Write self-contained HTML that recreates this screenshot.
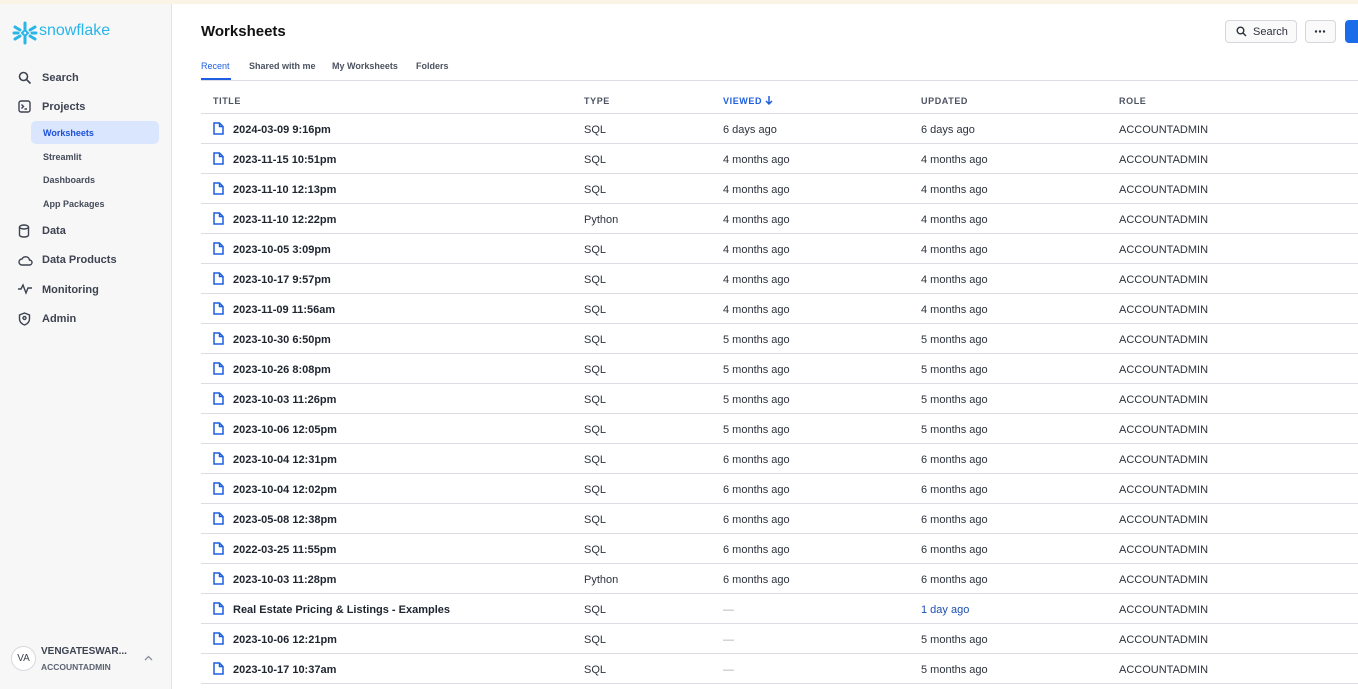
<!DOCTYPE html>
<html><head><meta charset="utf-8"><style>
*{margin:0;padding:0;box-sizing:border-box}
body{width:1358px;height:689px;overflow:hidden;background:#fff;font-family:"Liberation Sans",Arial,sans-serif;color:#1e252f;position:relative}
.top{position:absolute;left:0;top:0;width:1358px;height:4px;background:#fbf3e4}
.side{position:absolute;left:0;top:4px;width:172px;height:685px;background:#f7f7f8;border-right:1px solid #e3e4e8}
.nav{position:absolute;left:42px;font-size:11px;color:#3d4350;font-weight:bold}
.sub{position:absolute;left:43px;font-size:9px;color:#444b58;font-weight:bold}
.ic{position:absolute;left:18px}
.a{position:absolute;white-space:nowrap}
.h{font-size:9px;font-weight:bold;letter-spacing:.6px;color:#4b5260}
.line{position:absolute;left:201px;width:1157px;height:1px;background:#dcdde6}
.r{font-size:11px;color:#2c323c}
.t{font-size:11px;font-weight:bold;color:#1e252f}
</style></head><body>
<div class="top"></div>
<div class="side">
<svg style="position:absolute;left:12px;top:17px" width="26" height="24" viewBox="0 0 26 24" fill="none" stroke="#29b5e8" stroke-width="3" stroke-linecap="round"><path d="M13 2v6M13 16v6M3 6l5 3M18 15l5 3M3 18l5-3M18 9l5-3M2 12h4M20 12h4"/><path d="M10 12l3-3 3 3-3 3z" stroke-width="2"/></svg>
<div class="a" style="left:39px;top:18px;font-size:16px;color:#29b5e8">snowflake</div>
<svg class="ic" style="top:67px" width="14" height="14" viewBox="0 0 14 14" fill="none" stroke="#3d4350" stroke-width="1.6"><circle cx="5.5" cy="5.5" r="4"/><path d="M8.5 8.5l4 4"/></svg>
<div class="nav" style="top:68px">Search</div>
<svg class="ic" style="top:96px" width="13" height="13" viewBox="0 0 13 13" fill="none" stroke="#3d4350" stroke-width="1.4"><rect x="1" y="1" width="11" height="11" rx="2"/><path d="M3.5 4.5l2 2-2 2M6.5 9h2.5"/></svg>
<div class="nav" style="top:97px">Projects</div>
<div style="position:absolute;left:31px;top:117px;width:128px;height:23px;background:#d9e6fd;border-radius:5px"></div>
<div class="sub" style="top:124px;color:#1d4fd8">Worksheets</div>
<div class="sub" style="top:148px">Streamlit</div>
<div class="sub" style="top:171px">Dashboards</div>
<div class="sub" style="top:195px">App Packages</div>
<svg class="ic" style="top:220px" width="12" height="14" viewBox="0 0 12 14" fill="none" stroke="#3d4350" stroke-width="1.4"><ellipse cx="6" cy="3" rx="4.5" ry="2"/><path d="M1.5 3v8c0 1.2 2 2 4.5 2s4.5-.8 4.5-2V3"/></svg>
<div class="nav" style="top:221px">Data</div>
<svg class="ic" style="top:251px" width="15" height="11" viewBox="0 0 15 11" fill="none" stroke="#3d4350" stroke-width="1.4"><path d="M4 10h7.5a2.5 2.5 0 000-5 4 4 0 00-7.5-1A3 3 0 004 10z"/></svg>
<div class="nav" style="top:250px">Data Products</div>
<svg class="ic" style="top:279px" width="14" height="12" viewBox="0 0 14 12" fill="none" stroke="#3d4350" stroke-width="1.4"><path d="M0 6h3l2-4 3 8 2-5h4"/></svg>
<div class="nav" style="top:280px">Monitoring</div>
<svg class="ic" style="top:308px" width="13" height="14" viewBox="0 0 13 14" fill="none" stroke="#3d4350" stroke-width="1.4"><path d="M6.5 1l5 2v4c0 3-2.5 5-5 6-2.5-1-5-3-5-6V3z"/><circle cx="6.5" cy="6" r="1.5"/></svg>
<div class="nav" style="top:309px">Admin</div>
<div style="position:absolute;left:11px;top:642px;width:25px;height:25px;border-radius:50%;border:1px solid #d7d9de;background:#fff;font-size:10px;color:#3d4350;text-align:center;line-height:23px">VA</div>
<div class="a" style="left:41px;top:642px;font-size:10px;font-weight:bold;color:#3d4350">VENGATESWAR...</div>
<div class="a" style="left:41px;top:658px;font-size:8.5px;font-weight:bold;color:#5c6270">ACCOUNTADMIN</div>
<svg style="position:absolute;left:144px;top:651px" width="9" height="6" viewBox="0 0 9 6" fill="none" stroke="#8a8f9c" stroke-width="1.3"><path d="M1 5l3.5-3.5L8 5"/></svg>
</div>

<div class="a" style="left:201px;top:23px;font-size:15px;font-weight:bold;color:#111">Worksheets</div>
<div style="position:absolute;left:1225px;top:20px;width:72px;height:23px;border:1px solid #d5d7dd;border-radius:4px;background:#fafafa"></div>
<svg style="position:absolute;left:1236px;top:26px" width="11" height="11" viewBox="0 0 11 11" fill="none" stroke="#2c323c" stroke-width="1.4"><circle cx="4.5" cy="4.5" r="3.3"/><path d="M7 7l3 3"/></svg>
<div class="a" style="left:1253px;top:26px;font-size:11px;color:#2c323c">Search</div>
<div style="position:absolute;left:1305px;top:20px;width:31px;height:23px;border:1px solid #d5d7dd;border-radius:4px;background:#fafafa"></div>
<svg style="position:absolute;left:1314px;top:30px" width="12" height="3" viewBox="0 0 12 3" fill="#2c323c"><circle cx="2" cy="1.5" r="1.2"/><circle cx="6" cy="1.5" r="1.2"/><circle cx="10" cy="1.5" r="1.2"/></svg>
<div style="position:absolute;left:1345px;top:20px;width:20px;height:23px;border-radius:4px;background:#1a6ce8"></div>

<div class="a" style="left:201px;top:61px;font-size:9px;color:#1d5fe0">Recent</div>
<div style="position:absolute;left:201px;top:78px;width:30px;height:2px;background:#1d5fe0"></div>
<div class="a" style="left:249px;top:61px;font-size:9px;color:#4b5260;font-weight:bold">Shared with me</div>
<div class="a" style="left:332px;top:61px;font-size:9px;color:#4b5260;font-weight:bold">My Worksheets</div>
<div class="a" style="left:416px;top:61px;font-size:9px;color:#4b5260;font-weight:bold">Folders</div>
<div class="line" style="top:80px"></div>

<div class="a h" style="left:213px;top:96px">TITLE</div>
<div class="a h" style="left:584px;top:96px">TYPE</div>
<div class="a h" style="left:723px;top:96px;color:#1d5fe0">VIEWED</div>
<svg style="position:absolute;left:765px;top:96px" width="8" height="10" viewBox="0 0 8 10" fill="none" stroke="#1d5fe0" stroke-width="1.5"><path d="M4 0v8M1 5l3 3 3-3"/></svg>
<div class="a h" style="left:921px;top:96px">UPDATED</div>
<div class="a h" style="left:1119px;top:96px">ROLE</div>

<div id="rows"></div>
<script>
var d=[["2024-03-09 9:16pm","SQL","6 days ago","6 days ago"],
["2023-11-15 10:51pm","SQL","4 months ago","4 months ago"],
["2023-11-10 12:13pm","SQL","4 months ago","4 months ago"],
["2023-11-10 12:22pm","Python","4 months ago","4 months ago"],
["2023-10-05 3:09pm","SQL","4 months ago","4 months ago"],
["2023-10-17 9:57pm","SQL","4 months ago","4 months ago"],
["2023-11-09 11:56am","SQL","4 months ago","4 months ago"],
["2023-10-30 6:50pm","SQL","5 months ago","5 months ago"],
["2023-10-26 8:08pm","SQL","5 months ago","5 months ago"],
["2023-10-03 11:26pm","SQL","5 months ago","5 months ago"],
["2023-10-06 12:05pm","SQL","5 months ago","5 months ago"],
["2023-10-04 12:31pm","SQL","6 months ago","6 months ago"],
["2023-10-04 12:02pm","SQL","6 months ago","6 months ago"],
["2023-05-08 12:38pm","SQL","6 months ago","6 months ago"],
["2022-03-25 11:55pm","SQL","6 months ago","6 months ago"],
["2023-10-03 11:28pm","Python","6 months ago","6 months ago"],
["Real Estate Pricing &amp; Listings - Examples","SQL","—","1 day ago"],
["2023-10-06 12:21pm","SQL","—","5 months ago"],
["2023-10-17 10:37am","SQL","—","5 months ago"]];
var h='';
for(var i=0;i<d.length;i++){var y=113+30*i,ty=y+11;
h+='<div class="line" style="top:'+y+'px"></div>';
h+='<svg style="position:absolute;left:213px;top:'+(y+9)+'px" width="11" height="13" viewBox="0 0 11 13" fill="none" stroke="#1d5fe0" stroke-width="1.5"><path d="M1 1h5.5L10 4.5V12H1z"/><path d="M6.5 1v3.5H10"/></svg>';
h+='<div class="a t" style="left:233px;top:'+ty+'px">'+d[i][0]+'</div>';
h+='<div class="a r" style="left:584px;top:'+ty+'px">'+d[i][1]+'</div>';
h+='<div class="a r" style="left:723px;top:'+ty+'px;'+(d[i][2]=='—'?'color:#aaa':'')+'">'+d[i][2]+'</div>';
h+='<div class="a r" style="left:921px;top:'+ty+'px;'+(d[i][3]=='1 day ago'?'color:#1d4fb0':'')+'">'+d[i][3]+'</div>';
h+='<div class="a r" style="left:1119px;top:'+ty+'px">ACCOUNTADMIN</div>';}
h+='<div class="line" style="top:'+(113+30*d.length)+'px"></div>';
document.getElementById('rows').innerHTML=h;
</script>
</body></html>
